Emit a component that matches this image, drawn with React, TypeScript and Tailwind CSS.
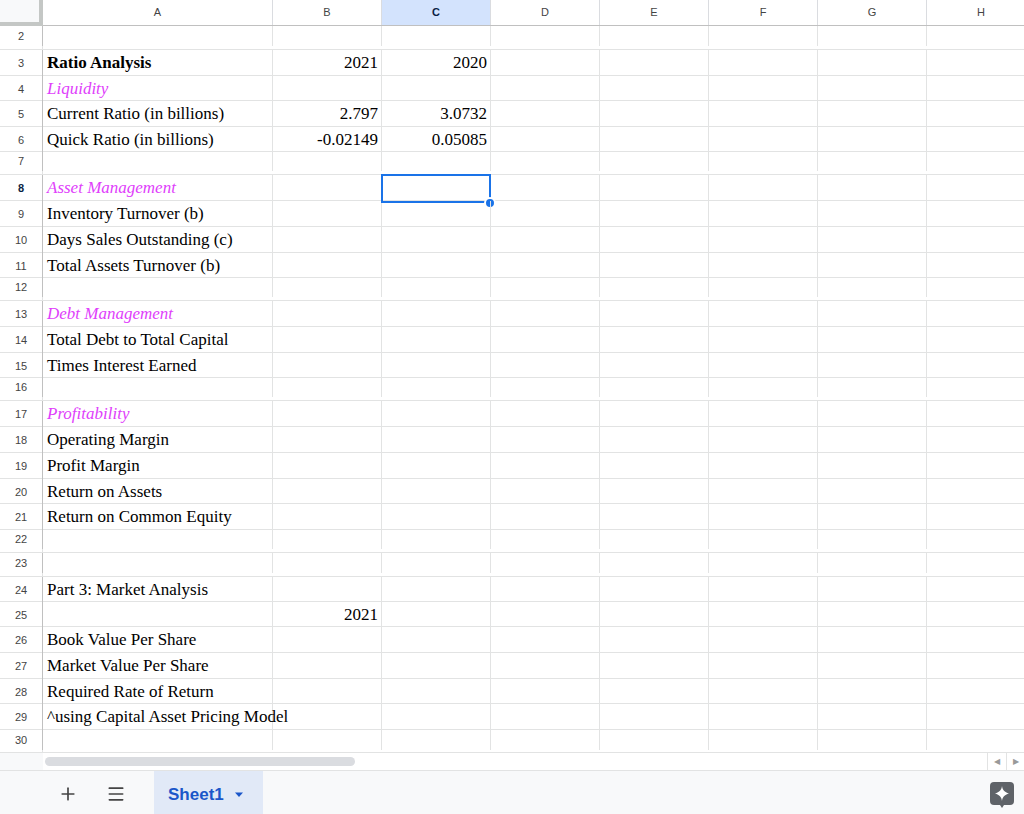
import { Plus, Menu } from "lucide-react";

type Cell = { t: string; s?: "b" | "i" | "r" };
const rows: { n: number; h: number; a?: Cell; b?: string; c?: string }[] = [
  { n: 2, h: 24 },
  { n: 3, h: 26, a: { t: "Ratio Analysis", s: "b" }, b: "2021", c: "2020" },
  { n: 4, h: 25, a: { t: "Liquidity", s: "i" } },
  { n: 5, h: 26, a: { t: "Current Ratio (in billions)" }, b: "2.797", c: "3.0732" },
  { n: 6, h: 25, a: { t: "Quick Ratio (in billions)" }, b: "-0.02149", c: "0.05085" },
  { n: 7, h: 23 },
  { n: 8, h: 26, a: { t: "Asset Management", s: "i" } },
  { n: 9, h: 26, a: { t: "Inventory Turnover (b)" } },
  { n: 10, h: 26, a: { t: "Days Sales Outstanding (c)" } },
  { n: 11, h: 25, a: { t: "Total Assets Turnover (b)" } },
  { n: 12, h: 23 },
  { n: 13, h: 26, a: { t: "Debt Management", s: "i" } },
  { n: 14, h: 26, a: { t: "Total Debt to Total Capital" } },
  { n: 15, h: 25, a: { t: "Times Interest Earned" } },
  { n: 16, h: 23 },
  { n: 17, h: 26, a: { t: "Profitability", s: "i" } },
  { n: 18, h: 26, a: { t: "Operating Margin" } },
  { n: 19, h: 26, a: { t: "Profit Margin" } },
  { n: 20, h: 25, a: { t: "Return on Assets" } },
  { n: 21, h: 26, a: { t: "Return on Common Equity" } },
  { n: 22, h: 23 },
  { n: 23, h: 24 },
  { n: 24, h: 25, a: { t: "Part 3: Market Analysis" } },
  { n: 25, h: 25, b: "2021" },
  { n: 26, h: 26, a: { t: "Book Value Per Share" } },
  { n: 27, h: 26, a: { t: "Market Value Per Share" } },
  { n: 28, h: 25, a: { t: "Required Rate of Return" } },
  { n: 29, h: 26, a: { t: "^using Capital Asset Pricing Model" } },
  { n: 30, h: 24 },
];

const cols = ["A", "B", "C", "D", "E", "F", "G", "H"];
const grid = "43px 230px 109px 109px 109px 109px 109px 109px 109px";

export default function App() {
  return (
    <div className="w-[1024px] h-[814px] overflow-hidden bg-white flex flex-col" style={{ fontFamily: "'Liberation Serif', serif" }}>
      <div className="flex-1 overflow-hidden">
        <div className="grid h-[26px] border-b border-[#c0c0c0]" style={{ gridTemplateColumns: grid }}>
          <div className="bg-[#f8f9fa] border-r-4 border-b-4 border-[#c4c7c5] -mb-[1px]" />
          {cols.map((c, i) => (
            <div
              key={c}
              className={`flex items-center justify-center border-r border-[#dadce0] text-[11px] ${i === 2 ? "bg-[#d3e3fd] font-bold text-[#0b1f44]" : "text-[#444]"}`}
              style={{ fontFamily: "'Liberation Sans', sans-serif" }}
            >
              {c}
            </div>
          ))}
        </div>
        {rows.map((r) => (
          <div key={r.n} className="grid border-b border-[#e2e3e3]" style={{ gridTemplateColumns: grid, height: r.h }}>
            <div
              className={`flex items-center justify-center border-r border-[#c0c0c0] text-[11px] ${r.n === 8 ? "font-bold text-[#0b1f44]" : "text-[#444]"}`}
              style={{ fontFamily: "'Liberation Sans', sans-serif" }}
            >
              {r.n}
            </div>
            <div
              className={`relative z-10 flex items-end pb-[1px] px-[4px] border-r border-[#e2e3e3] text-[17px] whitespace-nowrap ${r.a?.s === "b" ? "font-bold text-black" : r.a?.s === "i" ? "italic text-[#e040fb]" : "text-black"}`}
            >
              {r.a?.t}
            </div>
            <div className="flex items-end justify-end pb-[1px] px-[3px] border-r border-[#e2e3e3] text-[17px] text-black">{r.b}</div>
            <div className="relative flex items-end justify-end pb-[1px] px-[3px] border-r border-[#e2e3e3] text-[17px] text-black">
              {r.c}
              {r.n === 8 && (
                <>
                  <div className="absolute -left-[1px] -top-[1px] right-[-1px] bottom-[-1px] border-2 border-[#1a73e8]" />
                  <div className="absolute -right-[6px] -bottom-[7px] w-[12px] h-[12px] rounded-full bg-[#1a73e8] border-2 border-white" />
                </>
              )}
            </div>
            {[0, 1, 2, 3, 4, 5].map((i) => (
              <div key={i} className="border-r border-[#e2e3e3]" />
            ))}
          </div>
        ))}
      </div>
      <div className="h-[18px] flex items-center border-t border-[#e2e3e3] shrink-0">
        <div className="w-[43px] h-full bg-[#f8f9fa]" />
        <div className="ml-[2px] w-[310px] h-[9px] rounded-full bg-[#dadce0]" />
        <div className="flex-1" />
        <div className="flex h-full border-l border-[#e2e3e3]">
          <div className="w-[18px] flex items-center justify-center text-[8px] text-[#999]">◀</div>
          <div className="w-[18px] flex items-center justify-center text-[8px] text-[#999] border-l border-[#e2e3e3]">▶</div>
        </div>
      </div>
      <div className="h-[44px] bg-[#f8f9fa] border-t border-[#e2e3e3] flex items-stretch shrink-0">
        <div className="w-[135px] flex items-center pt-[3px] pl-[58px] gap-[28px] text-[#444]">
          <Plus size={20} strokeWidth={2} />
          <Menu size={20} strokeWidth={2} />
        </div>
        <div className="ml-[19px] w-[109px] bg-[#e1e9f7] flex items-center pt-[4px] pl-[14px] gap-[10px] text-[#1a56c9] text-[17px] font-bold" style={{ fontFamily: "'Liberation Sans', sans-serif" }}>
          Sheet1
          <svg width="10" height="6" viewBox="0 0 10 6"><path d="M1 0.5h8L5 5z" fill="#1a56c9" /></svg>
        </div>
        <div className="flex-1" />
        <div className="flex items-center pr-[10px] pt-[4px]">
          <svg width="24" height="26" viewBox="0 0 24 26">
            <rect x="0" y="0" width="24" height="23" rx="4" fill="#5f6368" />
            <path d="M10 23l2 3 2-3z" fill="#5f6368" />
            <path d="M12 4c.6 4 2.4 6 7 7.5-4.6 1.5-6.4 3.5-7 7.5-.6-4-2.4-6-7-7.5 4.6-1.5 6.4-3.5 7-7.5z" fill="#fff" />
          </svg>
        </div>
      </div>
    </div>
  );
}
